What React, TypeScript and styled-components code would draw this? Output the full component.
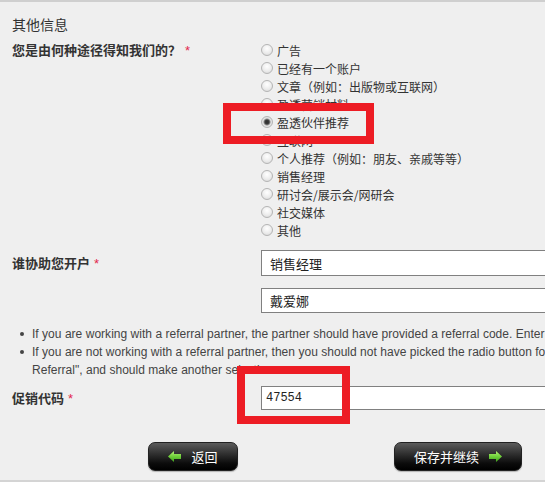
import React from "react";
import styled, { createGlobalStyle } from "styled-components";

const Global = createGlobalStyle`
  html, body { margin: 0; padding: 0; background: #efefef; overflow: hidden; }
  body { font-family: "Liberation Sans", "Noto Sans CJK SC", sans-serif; }
`;

const Page = styled.div`
  position: relative;
  width: 760px;
  height: 482px;
  box-sizing: border-box;
  border-top: 2px solid #cfcfcf;
  border-bottom: 2px solid #d4d4d4;
  padding: 13px 0 0 12px;
  color: #333;
`;

const SectionTitle = styled.h2`
  margin: 0;
  font-family: "Noto Sans CJK SC", sans-serif;
  font-weight: 400;
  font-size: 14px;
  line-height: 18px;
  color: #333;
`;

const FieldRow = styled.div<{ $mt: number }>`
  display: grid;
  grid-template-columns: 249px 1fr;
  align-items: start;
  margin-top: ${(p) => p.$mt}px;
`;

const Label = styled.label<{ $lh: number }>`
  font-family: "Noto Sans CJK SC", sans-serif;
  font-weight: 700;
  font-size: 13px;
  line-height: ${(p) => p.$lh}px;
  color: #333;
`;

const Required = styled.span`
  color: #e2264d;
  font-weight: 400;
  font-family: "Liberation Sans", sans-serif;
  margin-left: 4px;
`;

const RadioList = styled.div`
  display: flex;
  flex-direction: column;
`;

const RadioRow = styled.label`
  display: flex;
  align-items: center;
  gap: 4px;
  height: 18px;
  font-family: "Noto Sans CJK SC", sans-serif;
  font-size: 12px;
  color: #333;
`;

const Radio = styled.input.attrs({ type: "radio" })`
  appearance: none;
  -webkit-appearance: none;
  margin: 0;
  width: 12px;
  height: 12px;
  flex: none;
  box-sizing: border-box;
  border-radius: 50%;
  border: 1px solid #b4b4b4;
  background: radial-gradient(circle at 50% 35%, #ffffff 0%, #ececec 55%, #d4d4d4 100%);
  &:checked {
    background: radial-gradient(circle at 50% 50%, #2e2e2e 0, #3a3a3a 2px, #8a8a8a 3px, #e6e6e6 4px, #d2d2d2 100%);
  }
`;

const Controls = styled.div`
  display: flex;
  flex-direction: column;
  gap: 12px;
`;

const TextBox = styled.div<{ $h: number; $pl: number; $mono?: boolean }>`
  width: 420px;
  height: ${(p) => p.$h}px;
  box-sizing: border-box;
  background: #fff;
  border: 1px solid #808080;
  display: flex;
  align-items: center;
  padding-left: ${(p) => p.$pl}px;
  font-family: ${(p) => (p.$mono ? '"Liberation Mono", monospace' : '"Noto Sans CJK SC", sans-serif')};
  font-size: ${(p) => (p.$mono ? 12 : 13)}px;
  color: #222;
`;

const Notes = styled.ul`
  list-style: none;
  margin: 12px 0 0;
  padding: 0 0 0 20px;
`;

const Note = styled.li`
  position: relative;
  font-family: "Liberation Sans", sans-serif;
  font-size: 12px;
  line-height: 18px;
  letter-spacing: 0.03px;
  color: #444;
  white-space: nowrap;
  &::before {
    content: "";
    position: absolute;
    left: -12px;
    top: 7px;
    width: 4px;
    height: 4px;
    border-radius: 50%;
    background: #444;
  }
`;

const ButtonRow = styled.div`
  display: flex;
  gap: 156px;
  margin-top: 31px;
  padding-left: 136px;
`;

const NavButton = styled.button<{ $w: number }>`
  width: ${(p) => p.$w}px;
  height: 29px;
  box-sizing: border-box;
  border: 1px solid #222;
  border-radius: 7px;
  background: linear-gradient(to bottom, #5c5c5c 0%, #303030 40%, #0c0c0c 75%, #000 100%);
  box-shadow: 0 1px 1px rgba(0, 0, 0, 0.25);
  color: #fff;
  font-family: "Noto Sans CJK SC", sans-serif;
  font-size: 13px;
  display: flex;
  align-items: center;
  justify-content: center;
  gap: 10px;
  padding: 0;
  cursor: pointer;
`;

const Highlight = styled.div<{ $x: number; $y: number; $w: number; $h: number }>`
  position: absolute;
  left: ${(p) => p.$x}px;
  top: ${(p) => p.$y}px;
  width: ${(p) => p.$w}px;
  height: ${(p) => p.$h}px;
  box-sizing: border-box;
  border: 8px solid #ed1c24;
  pointer-events: none;
`;

const Arrow = ({ dir }: { dir: "left" | "right" }) => (
  <svg width="13" height="11" viewBox="0 0 13 11" style={{ flex: "none" }}>
    <defs>
      <linearGradient id={`g-${dir}`} x1="0" y1="0" x2="0" y2="1">
        <stop offset="0" stopColor="#b8f07a" />
        <stop offset="0.5" stopColor="#6fd03a" />
        <stop offset="1" stopColor="#3f9e1e" />
      </linearGradient>
    </defs>
    <polygon
      points={dir === "left" ? "0,5.5 6,0 6,3 13,3 13,8 6,8 6,11" : "13,5.5 7,0 7,3 0,3 0,8 7,8 7,11"}
      fill={`url(#g-${dir})`}
    />
  </svg>
);

const options = [
  "广告",
  "已经有一个账户",
  "文章（例如：出版物或互联网）",
  "盈透营销材料",
  "盈透伙伴推荐",
  "互联网",
  "个人推荐（例如：朋友、亲戚等等）",
  "销售经理",
  "研讨会/展示会/网研会",
  "社交媒体",
  "其他",
];

export default function App() {
  return (
    <>
      <Global />
      <Page>
        <SectionTitle>其他信息</SectionTitle>

        <FieldRow $mt={8}>
          <Label $lh={18}>
            您是由何种途径得知我们的？<Required>*</Required>
          </Label>
          <RadioList>
            {options.map((o) => (
              <RadioRow key={o}>
                <Radio name="source" defaultChecked={o === "盈透伙伴推荐"} />
                {o}
              </RadioRow>
            ))}
          </RadioList>
        </FieldRow>

        <FieldRow $mt={11}>
          <Label $lh={26}>
            谁协助您开户<Required>*</Required>
          </Label>
          <Controls>
            <TextBox $h={26} $pl={8}>销售经理</TextBox>
            <TextBox $h={25} $pl={8}>戴爱娜</TextBox>
          </Controls>
        </FieldRow>

        <Notes>
          <Note>
            If you are working with a referral partner, the partner should have provided a referral code. Enter it in the field below.
          </Note>
          <Note>
            If you are not working with a referral partner, then you should not have picked the radio button for "IBKR Partner
            <br />
            Referral", and should make another selection.
          </Note>
        </Notes>

        <FieldRow $mt={7}>
          <Label $lh={24}>
            促销代码<Required>*</Required>
          </Label>
          <TextBox $h={24} $pl={4} $mono>47554</TextBox>
        </FieldRow>

        <ButtonRow>
          <NavButton $w={90}>
            <Arrow dir="left" />
            返回
          </NavButton>
          <NavButton $w={128}>
            保存并继续
            <Arrow dir="right" />
          </NavButton>
        </ButtonRow>

        <Highlight $x={223} $y={101} $w={151} $h={41} />
        <Highlight $x={237} $y={364} $w={113} $h={58} />
      </Page>
    </>
  );
}
